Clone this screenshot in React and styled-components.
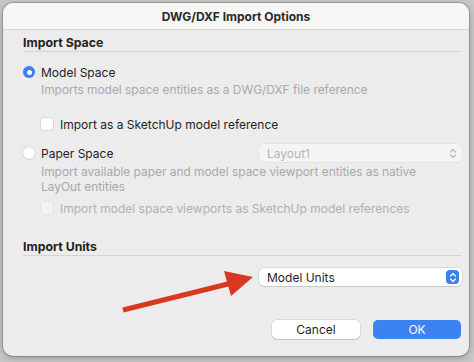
import React from 'react'
import styled, { createGlobalStyle } from 'styled-components'

const Global = createGlobalStyle`
  html, body {
    margin: 0;
    padding: 0;
    background: #c9c9c9;
    font-family: "Inter", "Liberation Sans", sans-serif;
    -webkit-font-smoothing: antialiased;
  }
`

const Page = styled.div`
  position: relative;
  width: 474px;
  height: 362px;
  padding: 3px 0 0 3px;
  box-sizing: border-box;
  overflow: hidden;
`

const Dialog = styled.div`
  width: 466px;
  height: 353px;
  background: #ececec;
  border-radius: 10px;
  box-shadow: 0 0 0 1px rgba(0, 0, 0, 0.18), 0 2px 8px rgba(0, 0, 0, 0.25);
  overflow: hidden;
  display: flex;
  flex-direction: column;
`

const TitleBar = styled.div`
  height: 26px;
  flex: none;
  background: #f6f6f4;
  border-bottom: 1px solid #d6d6d4;
  display: flex;
  align-items: center;
  justify-content: center;
  font-size: 12px;
  font-weight: 700;
  color: #2a2a2a;
`

const Body = styled.div`
  padding: 0 7px 0 20px;
  display: flex;
  flex-direction: column;
`

const Header = styled.div`
  margin-top: ${p => p.$top || 0}px;
  padding: 5px 0 0 0;
  line-height: 16px;
  font-size: 12.3px;
  font-weight: 700;
  color: #222;
  border-bottom: 1px solid #d4d4d4;
`

const Row = styled.div`
  display: flex;
  align-items: center;
  justify-content: ${p => (p.$end ? 'flex-end' : 'space-between')};
  margin-top: ${p => p.$top || 0}px;
  height: ${p => p.$h || 16}px;
  padding-left: ${p => p.$indent || 0}px;
`

const Label = styled.label`
  display: flex;
  align-items: center;
  gap: 6px;
  font-size: 12px;
  color: ${p => (p.$disabled ? '#b0b0b0' : '#1f1f1f')};
`

const Radio = styled.span`
  width: 12px;
  height: 12px;
  border-radius: 50%;
  box-sizing: border-box;
  background: ${p => (p.$on ? '#3b7ff0' : '#fff')};
  box-shadow: ${p => (p.$on ? 'none' : '0 0 0 0.5px rgba(0,0,0,0.15), 0 1px 1px rgba(0,0,0,0.08)')};
  display: flex;
  align-items: center;
  justify-content: center;
  &::after {
    content: '';
    width: 5px;
    height: 5px;
    border-radius: 50%;
    background: ${p => (p.$on ? '#fff' : 'transparent')};
  }
`

const Check = styled.span`
  width: 12px;
  height: 12px;
  border-radius: 3px;
  background: ${p => (p.$disabled ? '#f2f2f2' : '#fff')};
  box-shadow: 0 0 0 0.5px rgba(0, 0, 0, ${p => (p.$disabled ? 0.08 : 0.18)});
  margin-right: 1px;
`

const Desc = styled.div`
  margin-top: ${p => p.$top || 0}px;
  padding-left: 18px;
  font-size: 11.9px;
  line-height: ${p => p.$lh || 16}px;
  color: #a9a9a9;
`

const Select = styled.div`
  width: 203px;
  height: 18px;
  box-sizing: border-box;
  border-radius: 5px;
  background: ${p => (p.$disabled ? '#f4f4f4' : '#fff')};
  box-shadow: 0 0 0 0.5px rgba(0, 0, 0, ${p => (p.$disabled ? 0.06 : 0.15)}), 0 1px 1px rgba(0, 0, 0, ${p => (p.$disabled ? 0.02 : 0.08)});
  display: flex;
  align-items: center;
  justify-content: space-between;
  padding: 0 3px 0 8px;
  font-size: 12px;
  color: ${p => (p.$disabled ? '#b4b4b4' : '#1f1f1f')};
`

const Stepper = styled.span`
  width: 13px;
  height: 14px;
  border-radius: 4px;
  background: ${p => (p.$active ? '#3b7ff0' : 'transparent')};
  display: flex;
  align-items: center;
  justify-content: center;
`

const Footer = styled.div`
  display: flex;
  justify-content: flex-end;
  gap: 13px;
  margin-top: 34px;
  padding-right: 1px;
`

const Button = styled.div`
  width: 88px;
  height: 19px;
  border-radius: 5px;
  display: flex;
  align-items: center;
  justify-content: center;
  font-size: 12px;
  background: ${p => (p.$primary ? '#3d82f1' : '#fff')};
  color: ${p => (p.$primary ? '#fff' : '#1f1f1f')};
  box-shadow: ${p => (p.$primary ? 'none' : '0 0 0 0.5px rgba(0,0,0,0.15), 0 1px 1px rgba(0,0,0,0.1)')};
`

const Arrow = styled.svg`
  position: absolute;
  left: 0;
  top: 0;
  pointer-events: none;
`

const Chevrons = ({ color }) => (
  <svg width="8" height="11" viewBox="0 0 8 11">
    <path d="M1.5 4 L4 1.5 L6.5 4 M1.5 7 L4 9.5 L6.5 7" fill="none" stroke={color} strokeWidth="1.2" strokeLinecap="round" strokeLinejoin="round" />
  </svg>
)

export default function App() {
  return (
    <Page>
      <Global />
      <Dialog>
        <TitleBar>DWG/DXF Import Options</TitleBar>
        <Body>
          <Header>Import Space</Header>

          <Row $top={12}>
            <Label><Radio $on />Model Space</Label>
          </Row>
          <Desc $top={2}>Imports model space entities as a DWG/DXF file reference</Desc>

          <Row $top={18} $indent={18}>
            <Label><Check />Import as a SketchUp model reference</Label>
          </Row>

          <Row $top={12} $h={18}>
            <Label><Radio />Paper Space</Label>
            <Select $disabled>
              Layout1
              <Stepper><Chevrons color="#b8b8b8" /></Stepper>
            </Select>
          </Row>
          <Desc $top={2} $lh={15}>
            Import available paper and model space viewport entities as native
            <br />
            LayOut entities
          </Desc>
          <Row $top={6} $indent={18}>
            <Label $disabled><Check $disabled />Import model space viewports as SketchUp model references</Label>
          </Row>

          <Header $top={18}>Import Units</Header>
          <Row $top={12} $h={18} $end>
            <Select>
              Model Units
              <Stepper $active><Chevrons color="#fff" /></Stepper>
            </Select>
          </Row>

          <Footer>
            <Button>Cancel</Button>
            <Button $primary>OK</Button>
          </Footer>
        </Body>
      </Dialog>

      <Arrow width="474" height="362" viewBox="0 0 474 362">
        <line x1="123" y1="310" x2="232" y2="283" stroke="#d93820" strokeWidth="5" />
        <polygon points="224,271 231,296 253,277" fill="#d93820" />
      </Arrow>
    </Page>
  )
}
